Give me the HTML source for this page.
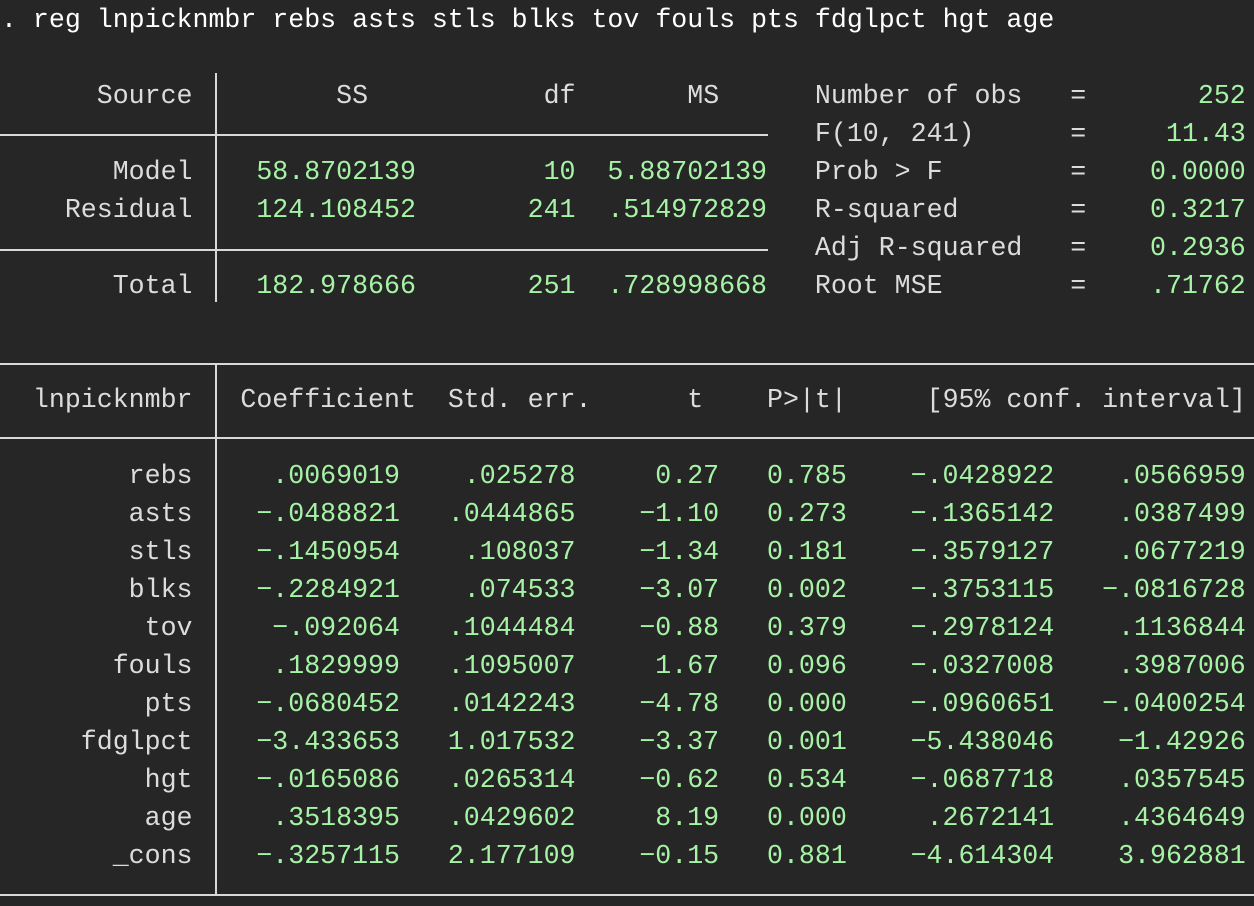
<!DOCTYPE html>
<html><head><meta charset="utf-8"><style>
html,body{margin:0;padding:0;background:#262626;}
body{width:1254px;height:906px;position:relative;overflow:hidden;font-family:"Liberation Mono","DejaVu Sans Mono",monospace;font-size:26.6px;color:#dcdcdc;}
.r{position:absolute;left:1px;height:38px;line-height:38px;white-space:pre;}
.r span{display:inline-block;text-align:right;white-space:pre;}
.g{color:#a6f3a6;}
.h{position:absolute;height:2px;background:#d8d8d8;}
.v{position:absolute;width:2px;background:#d8d8d8;left:215px;}
</style></head><body>
<div class="r" style="top:1px;color:#fff">. reg lnpicknmbr rebs asts stls blks tov fouls pts fdglpct hgt age</div>

<div class="r" style="top:77px">      Source         SS           df       MS      Number of obs   =<span class="g" style="width:10ch">252</span></div>
<div class="r" style="top:115px">                                                   F(10, 241)      =<span class="g" style="width:10ch">11.43</span></div>
<div class="r" style="top:153px"><span style="width:12ch">Model</span><span class="g" style="width:14ch">58.8702139</span><span class="g" style="width:10ch">10</span><span class="g" style="width:12ch">5.88702139</span>   Prob &gt; F        =<span class="g" style="width:10ch">0.0000</span></div>
<div class="r" style="top:191px"><span style="width:12ch">Residual</span><span class="g" style="width:14ch">124.108452</span><span class="g" style="width:10ch">241</span><span class="g" style="width:12ch">.514972829</span>   R-squared       =<span class="g" style="width:10ch">0.3217</span></div>
<div class="r" style="top:229px">                                                   Adj R-squared   =<span class="g" style="width:10ch">0.2936</span></div>
<div class="r" style="top:267px"><span style="width:12ch">Total</span><span class="g" style="width:14ch">182.978666</span><span class="g" style="width:10ch">251</span><span class="g" style="width:12ch">.728998668</span>   Root MSE        =<span class="g" style="width:10ch">.71762</span></div>

<div class="r" style="top:381px">  lnpicknmbr   Coefficient  Std. err.      t    P&gt;|t|     [95% conf. interval]</div>

<div class="r" style="top:457px"><span style="width:12ch">rebs</span><span class="g" style="width:13ch">.0069019</span><span class="g" style="width:11ch">.025278</span><span class="g" style="width:9ch">0.27</span><span class="g" style="width:8ch">0.785</span><span class="g" style="width:13ch">−.0428922</span><span class="g" style="width:12ch">.0566959</span></div>
<div class="r" style="top:495px"><span style="width:12ch">asts</span><span class="g" style="width:13ch">−.0488821</span><span class="g" style="width:11ch">.0444865</span><span class="g" style="width:9ch">−1.10</span><span class="g" style="width:8ch">0.273</span><span class="g" style="width:13ch">−.1365142</span><span class="g" style="width:12ch">.0387499</span></div>
<div class="r" style="top:533px"><span style="width:12ch">stls</span><span class="g" style="width:13ch">−.1450954</span><span class="g" style="width:11ch">.108037</span><span class="g" style="width:9ch">−1.34</span><span class="g" style="width:8ch">0.181</span><span class="g" style="width:13ch">−.3579127</span><span class="g" style="width:12ch">.0677219</span></div>
<div class="r" style="top:571px"><span style="width:12ch">blks</span><span class="g" style="width:13ch">−.2284921</span><span class="g" style="width:11ch">.074533</span><span class="g" style="width:9ch">−3.07</span><span class="g" style="width:8ch">0.002</span><span class="g" style="width:13ch">−.3753115</span><span class="g" style="width:12ch">−.0816728</span></div>
<div class="r" style="top:609px"><span style="width:12ch">tov</span><span class="g" style="width:13ch">−.092064</span><span class="g" style="width:11ch">.1044484</span><span class="g" style="width:9ch">−0.88</span><span class="g" style="width:8ch">0.379</span><span class="g" style="width:13ch">−.2978124</span><span class="g" style="width:12ch">.1136844</span></div>
<div class="r" style="top:647px"><span style="width:12ch">fouls</span><span class="g" style="width:13ch">.1829999</span><span class="g" style="width:11ch">.1095007</span><span class="g" style="width:9ch">1.67</span><span class="g" style="width:8ch">0.096</span><span class="g" style="width:13ch">−.0327008</span><span class="g" style="width:12ch">.3987006</span></div>
<div class="r" style="top:685px"><span style="width:12ch">pts</span><span class="g" style="width:13ch">−.0680452</span><span class="g" style="width:11ch">.0142243</span><span class="g" style="width:9ch">−4.78</span><span class="g" style="width:8ch">0.000</span><span class="g" style="width:13ch">−.0960651</span><span class="g" style="width:12ch">−.0400254</span></div>
<div class="r" style="top:723px"><span style="width:12ch">fdglpct</span><span class="g" style="width:13ch">−3.433653</span><span class="g" style="width:11ch">1.017532</span><span class="g" style="width:9ch">−3.37</span><span class="g" style="width:8ch">0.001</span><span class="g" style="width:13ch">−5.438046</span><span class="g" style="width:12ch">−1.42926</span></div>
<div class="r" style="top:761px"><span style="width:12ch">hgt</span><span class="g" style="width:13ch">−.0165086</span><span class="g" style="width:11ch">.0265314</span><span class="g" style="width:9ch">−0.62</span><span class="g" style="width:8ch">0.534</span><span class="g" style="width:13ch">−.0687718</span><span class="g" style="width:12ch">.0357545</span></div>
<div class="r" style="top:799px"><span style="width:12ch">age</span><span class="g" style="width:13ch">.3518395</span><span class="g" style="width:11ch">.0429602</span><span class="g" style="width:9ch">8.19</span><span class="g" style="width:8ch">0.000</span><span class="g" style="width:13ch">.2672141</span><span class="g" style="width:12ch">.4364649</span></div>
<div class="r" style="top:837px"><span style="width:12ch">_cons</span><span class="g" style="width:13ch">−.3257115</span><span class="g" style="width:11ch">2.177109</span><span class="g" style="width:9ch">−0.15</span><span class="g" style="width:8ch">0.881</span><span class="g" style="width:13ch">−4.614304</span><span class="g" style="width:12ch">3.962881</span></div>

<div class="h" style="top:134px;left:0;width:768px"></div>
<div class="h" style="top:249px;left:0;width:768px"></div>
<div class="h" style="top:363px;left:0;width:1254px"></div>
<div class="h" style="top:437px;left:0;width:1254px"></div>
<div class="h" style="top:894px;left:0;width:1254px"></div>
<div class="v" style="top:73px;height:229px"></div>
<div class="v" style="top:364px;height:531px"></div>
</body></html>
